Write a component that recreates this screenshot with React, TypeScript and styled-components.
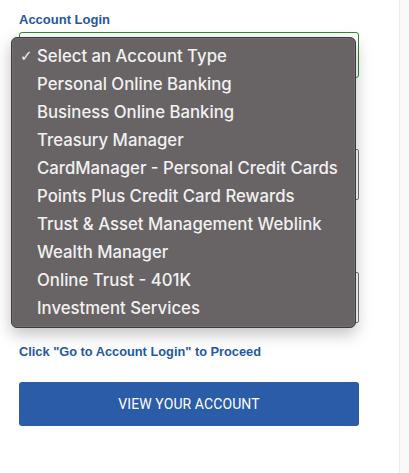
import React from "react";
import styled, { createGlobalStyle } from "styled-components";

const GlobalStyle = createGlobalStyle`
  html, body {
    margin: 0;
    padding: 0;
    background: #ffffff;
  }
  * {
    box-sizing: border-box;
  }
`;

const accountTypes = [
  "Select an Account Type",
  "Personal Online Banking",
  "Business Online Banking",
  "Treasury Manager",
  "CardManager - Personal Credit Cards",
  "Points Plus Credit Card Rewards",
  "Trust & Asset Management Weblink",
  "Wealth Manager",
  "Online Trust - 401K",
  "Investment Services",
];

function App() {
  return (
    <>
      <GlobalStyle />
      <Page>
        <Panel>
          <FieldLabel>Account Login</FieldLabel>
          <SelectBox $active />
          <InputBox $gap={71} />
          <InputBox $gap={72} />
          <Hint>Click "Go to Account Login" to Proceed</Hint>
          <ViewButton>VIEW YOUR ACCOUNT</ViewButton>

          <Menu>
            {accountTypes.map((name, i) => (
              <MenuItem key={name}>
                <Check>{i === 0 ? "✓" : ""}</Check>
                {name}
              </MenuItem>
            ))}
          </Menu>
        </Panel>
        <SideStrip />
      </Page>
    </>
  );
}

export default App;

const Page = styled.div`
  display: flex;
  width: 409px;
  height: 473px;
  overflow: hidden;
`;

const Panel = styled.div`
  position: relative;
  width: 399px;
  display: flex;
  flex-direction: column;
  padding: 12px 0 0 19px;
  background: #fff;
`;

const SideStrip = styled.div`
  flex: 1;
  background: #f9f9f9;
  border-left: 1px solid #ececec;
`;

const FieldLabel = styled.div`
  font-family: "Liberation Sans", Arial, sans-serif;
  font-weight: 700;
  font-size: 13px;
  line-height: 15px;
  color: #2457a6;
`;

const SelectBox = styled.div<{ $active?: boolean }>`
  margin-top: 5px;
  width: 340px;
  height: 46px;
  border: 1px solid ${(p) => (p.$active ? "#2e8b34" : "#888")};
  border-radius: 3px;
`;

const InputBox = styled.div<{ $gap: number }>`
  margin-top: ${(p) => p.$gap}px;
  width: 340px;
  height: 51px;
  border: 1px solid #7a7a7a;
  border-radius: 2px;
`;

const Hint = styled.div`
  margin-top: 21px;
  font-family: "Liberation Sans", Arial, sans-serif;
  font-weight: 700;
  font-size: 12.8px;
  line-height: 15px;
  color: #2457a6;
`;

const ViewButton = styled.button`
  margin-top: 23px;
  width: 340px;
  height: 44px;
  border: none;
  border-radius: 3px;
  background: #2a5ca7;
  color: #fff;
  font-family: Roboto, "Liberation Sans", sans-serif;
  font-size: 14px;
  letter-spacing: 0.1px;
`;

const Menu = styled.div`
  position: absolute;
  left: 11px;
  top: 37px;
  width: 345px;
  height: 291px;
  padding: 4px 0 6px;
  background: #686465;
  border: 1px solid #3c3a3b;
  border-radius: 6px;
  box-shadow: 0 6px 16px rgba(0, 0, 0, 0.25), inset 0 0 0 1px rgba(255, 255, 255, 0.08);
`;

const MenuItem = styled.div`
  display: flex;
  align-items: center;
  height: 28px;
  font-family: Inter, "Noto Sans", sans-serif;
  font-size: 16.75px;
  font-weight: 500;
  color: #f2f1f1;
  white-space: nowrap;
`;

const Check = styled.span`
  width: 25px;
  padding-left: 8px;
  font-size: 15px;
  font-family: "DejaVu Sans", sans-serif;
`;
